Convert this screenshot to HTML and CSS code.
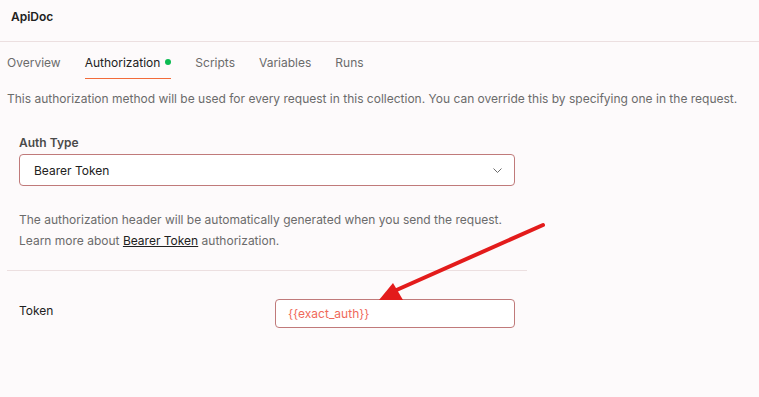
FILE: index.html
```html
<!DOCTYPE html>
<html>
<head>
<meta charset="utf-8">
<link rel="stylesheet" href="styles.css">
</head>
<body>
<div class="page">
  <header class="top">ApiDoc</header>
  <nav class="tabs">
    <span class="tab">Overview</span>
    <span class="tab active">Authorization <i class="dot"></i></span>
    <span class="tab">Scripts</span>
    <span class="tab">Variables</span>
    <span class="tab">Runs</span>
  </nav>
  <p class="desc">This authorization method will be used for every request in this collection. You can override this by specifying one in the request.</p>
  <section class="auth">
    <div class="label">Auth Type</div>
    <div class="select">
      <span>Bearer Token</span>
      <svg class="chev" width="9" height="5" viewBox="0 0 9 5"><path d="M0.5 0.5 L4.5 4.5 L8.5 0.5" fill="none" stroke="#6b6b6b" stroke-width="1"/></svg>
    </div>
    <p class="help">The authorization header will be automatically generated when you send the request.<br>Learn more about <a>Bearer Token</a> authorization.</p>
  </section>
  <hr class="divider">
  <div class="token-row">
    <span class="token-label">Token</span>
    <div class="token-input">{{exact_auth}}</div>
  </div>
</div>
<svg class="arrow" width="759" height="397" viewBox="0 0 759 397">
  <line x1="543" y1="225" x2="392" y2="292" stroke="#e31b1b" stroke-width="4" stroke-linecap="round"/>
  <polygon points="379,300 393,283 403,300" fill="#e31b1b"/>
</svg>
</body>
</html>
```
FILE: styles.css
```css
* { box-sizing: border-box; }
html, body { margin: 0; padding: 0; }
body {
  background: #fdfafb;
  font-family: Inter, "Noto Sans", sans-serif;
  font-size: 12px;
  color: #6b6b6b;
  width: 759px;
  height: 397px;
  overflow: hidden;
  position: relative;
}
.page { display: flex; flex-direction: column; }
.top {
  height: 42px;
  border-bottom: 1px solid #ecdfe0;
  padding: 10px 0 0 11px;
  font-weight: 600;
  color: #212121;
  font-size: 12px;
  line-height: 14px;
}
.tabs {
  display: flex;
  gap: 24px;
  padding: 0 0 0 7px;
  height: 38px;
}
.tab {
  display: flex;
  align-items: center;
  height: 37px;
  padding-top: 4px;
  color: #6b6b6b;
  font-size: 12px;
  border-bottom: 1px solid transparent;
}
.tab.active {
  color: #212121;
  border-bottom: 1px solid #f26b3a;
  gap: 5px;
}
.dot {
  width: 6px; height: 6px;
  border-radius: 50%;
  background: #0cbb52;
  display: inline-block;
}
.desc { margin: 11px 0 0 7px; line-height: 16px; color: #6b6b6b; }
.auth { padding: 0 0 0 19px; width: 515px; }
.label {
  margin-top: 29px;
  font-weight: 600;
  color: #4a4a4a;
  line-height: 14px;
}
.select {
  margin-top: 4px;
  height: 32px;
  width: 496px;
  border: 1px solid #c07a7a;
  border-radius: 4px;
  display: flex;
  align-items: center;
  justify-content: space-between;
  padding: 0 12px 0 14px;
  color: #212121;
  background: #fff;
}
.help { margin: 23px 0 0 0; line-height: 21px; color: #6b6b6b; }
.help a { color: #212121; text-decoration: underline; }
.divider {
  margin: 19px 0 0 7px;
  width: 520px;
  border: 0;
  border-top: 1px solid #ecdfe0;
}
.token-row {
  display: flex;
  align-items: flex-start;
  margin-top: 28px;
  padding-left: 19px;
}
.token-label { width: 256px; color: #212121; padding-top: 4px; line-height: 16px; }
.token-input {
  width: 240px;
  height: 29px;
  border: 1px solid #c07a7a;
  border-radius: 4px;
  display: flex;
  align-items: center;
  padding-left: 12px;
  color: #f0695a;
  background: #fff;
}
.arrow { position: absolute; left: 0; top: 0; pointer-events: none; }
```
